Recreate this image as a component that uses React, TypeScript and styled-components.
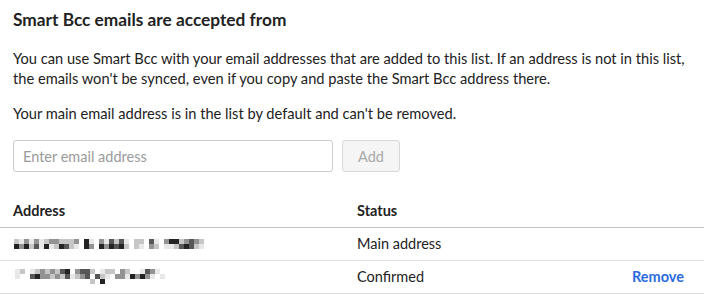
import React from "react";
import styled, { createGlobalStyle } from "styled-components";

const GlobalStyle = createGlobalStyle`
  html, body { margin: 0; padding: 0; background: #ffffff; }
  body { font-family: "Lato", "Noto Sans", sans-serif; color: #222222; }
  * { box-sizing: border-box; }
`;

const Page = styled.div`
  width: 704px;
  height: 301px;
  overflow: hidden;
  background: #ffffff;
  padding-top: 9px;
`;

const Section = styled.div`
  padding: 0 13px;
`;

const Title = styled.h2`
  margin: 0;
  font-size: 17.3px;
  line-height: 22px;
  font-weight: 700;
  color: #222222;
`;

const Paragraph = styled.p<{ $gap: number }>`
  margin: ${(p) => p.$gap}px 0 0;
  font-size: 14.65px;
  line-height: 20px;
  color: #222222;
  white-space: nowrap;
`;

const Form = styled.form`
  display: flex;
  gap: 9px;
  margin-top: 16px;
`;

const EmailInput = styled.input`
  width: 320px;
  height: 32px;
  border: 1px solid #cccccc;
  border-radius: 3px;
  padding: 0 9px;
  font-family: inherit;
  font-size: 14.5px;
  color: #222222;
  outline: none;
  &::placeholder { color: #9a9a9a; }
`;

const AddButton = styled.button`
  width: 58px;
  height: 32px;
  border: 1px solid #d8d8d8;
  border-radius: 3px;
  background: #f5f5f5;
  color: #a9a9a9;
  font-family: inherit;
  font-size: 14.5px;
  padding: 0;
`;

const Table = styled.table`
  width: 100%;
  margin-top: 22px;
  border-collapse: collapse;
  font-size: 14.5px;
  color: #222222;
`;

const HeadCell = styled.th<{ $w?: number }>`
  text-align: left;
  font-weight: 700;
  height: 33px;
  padding: 0 0 0 13px;
  border-bottom: 1px solid #c2c2c2;
  width: ${(p) => (p.$w ? `${p.$w}px` : "auto")};
`;

const Cell = styled.td<{ $align?: string }>`
  height: 33px;
  padding: 0 ${(p) => (p.$align === "right" ? "20px" : "0")} 0 13px;
  border-bottom: 1px solid #dedede;
  text-align: ${(p) => p.$align || "left"};
  vertical-align: middle;
`;

const RemoveLink = styled.a`
  color: #2b6be0;
  font-weight: 700;
  text-decoration: none;
  cursor: pointer;
`;

const MosaicSvg = styled.svg`
  display: block;
`;

const shades: Record<string, string> = {
  "1": "#e8e8e8",
  "2": "#c6c6c6",
  "3": "#939393",
  "4": "#575757",
  "5": "#232323",
};

const Mosaic: React.FC<{ rows: string[]; offset: number }> = ({ rows, offset }) => {
  const cell = 5;
  const width = Math.max(...rows.map((r) => r.length)) * cell + offset;
  return (
    <MosaicSvg width={width} height={rows.length * cell} aria-label="redacted email address">
      {rows.map((row, y) =>
        row.split("").map((c, x) =>
          shades[c] ? (
            <rect key={`${x}-${y}`} x={offset + x * cell} y={y * cell} width={cell} height={cell} fill={shades[c]} />
          ) : null
        )
      )}
    </MosaicSvg>
  );
};

const addr1 = [
  "2131312332223.51.314241.22.41.35523432",
  "5352415125421.53.535452.21.32.11245421",
];
const addr2 = [
  "12.12323245.3442.122.32..1431.",
  "1..453323241234.421.33153531.1",
  "...............2.5...........",
];

export default function App() {
  return (
    <Page>
      <GlobalStyle />
      <Section>
        <Title>Smart Bcc emails are accepted from</Title>
        <Paragraph $gap={18}>
          You can use Smart Bcc with your email addresses that are added to this list. If an address is not in this list,
          <br />
          the emails won't be synced, even if you copy and paste the Smart Bcc address there.
        </Paragraph>
        <Paragraph $gap={15}>Your main email address is in the list by default and can't be removed.</Paragraph>
        <Form onSubmit={(e) => e.preventDefault()}>
          <EmailInput type="email" placeholder="Enter email address" />
          <AddButton type="submit" disabled>
            Add
          </AddButton>
        </Form>
      </Section>
      <Table>
        <thead>
          <tr>
            <HeadCell $w={344}>Address</HeadCell>
            <HeadCell>Status</HeadCell>
            <HeadCell />
          </tr>
        </thead>
        <tbody>
          <tr>
            <Cell>
              <Mosaic rows={addr1} offset={1} />
            </Cell>
            <Cell>Main address</Cell>
            <Cell $align="right" />
          </tr>
          <tr>
            <Cell>
              <Mosaic rows={addr2} offset={2} />
            </Cell>
            <Cell>Confirmed</Cell>
            <Cell $align="right">
              <RemoveLink>Remove</RemoveLink>
            </Cell>
          </tr>
        </tbody>
      </Table>
    </Page>
  );
}
